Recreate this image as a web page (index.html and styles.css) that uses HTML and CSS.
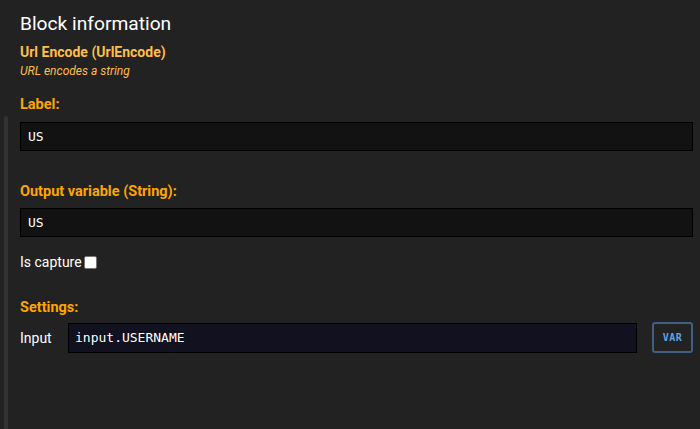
FILE: index.html
```html
<!DOCTYPE html>
<html>
<head>
<meta charset="utf-8">
<link rel="stylesheet" href="styles.css">
</head>
<body>
<div class="panel">
  <div class="rail"></div>
  <div class="content">
    <h1 class="title">Block information</h1>
    <div class="block-name">Url Encode (UrlEncode)</div>
    <div class="block-desc">URL encodes a string</div>

    <div class="field-label label-first">Label:</div>
    <div class="text-box">US</div>

    <div class="field-label label-output">Output variable (String):</div>
    <div class="text-box">US</div>

    <label class="capture">Is capture<span class="check"></span></label>

    <div class="field-label label-settings">Settings:</div>
    <div class="setting-row">
      <span class="setting-name">Input</span>
      <div class="setting-box">input.USERNAME</div>
      <button class="var-btn">VAR</button>
    </div>
  </div>
</div>
</body>
</html>
```
FILE: styles.css
```css
html, body {
  margin: 0;
  padding: 0;
  background: #222222;
  height: 100%;
}
body {
  font-family: Roboto, "Liberation Sans", sans-serif;
  color: #ffffff;
  overflow: hidden;
}
.panel {
  display: flex;
  height: 429px;
}
.rail {
  width: 4px;
  margin-left: 4px;
  margin-top: 116px;
  background: #333333;
  border-radius: 2px 2px 0 0;
  flex: none;
}
.content {
  flex: 1;
  padding: 11px 7px 0 12px;
  display: flex;
  flex-direction: column;
}
.title {
  margin: 0;
  font-size: 19.2px;
  font-weight: 400;
  line-height: 26px;
  color: #ffffff;
}
.block-name {
  margin-top: 7px;
  font-size: 14px;
  font-weight: 700;
  line-height: 16px;
  color: #ffbe46;
}
.block-desc {
  margin-top: 4px;
  font-size: 12px;
  font-style: italic;
  line-height: 14px;
  color: #ffbe46;
}
.field-label {
  font-size: 14.5px;
  font-weight: 700;
  line-height: 18px;
  color: #ffa500;
}
.label-first { margin-top: 18px; }
.label-output { margin-top: 32px; }
.label-settings { margin-top: 28px; }
.text-box {
  margin-top: 8px;
  box-sizing: border-box;
  height: 29px;
  background: #121212;
  border: 1px solid #000000;
  padding: 0 7px;
  font-family: "DejaVu Sans Mono", monospace;
  font-size: 13px;
  line-height: 27px;
  color: #ffffff;
}
.label-output + .text-box { margin-top: 7px; }
.capture {
  margin-top: 16px;
  display: flex;
  align-items: center;
  font-size: 14px;
  line-height: 18px;
  color: #ffffff;
}
.check {
  display: inline-block;
  width: 11px;
  height: 11px;
  margin-left: 2px;
  background: #ffffff;
  border: 1px solid #767676;
  border-radius: 2px;
}
.setting-row {
  margin-top: 5px;
  display: flex;
  align-items: center;
}
.setting-name {
  width: 48px;
  font-size: 14px;
  line-height: 18px;
}
.setting-box {
  flex: 1;
  box-sizing: border-box;
  height: 30px;
  background: #11111f;
  border: 1px solid #000000;
  padding: 0 6px;
  font-family: "DejaVu Sans Mono", monospace;
  font-size: 13px;
  line-height: 28px;
  color: #ffffff;
}
.var-btn {
  margin-left: 15px;
  box-sizing: border-box;
  width: 41px;
  height: 31px;
  background: transparent;
  border: 2px solid #3f5f83;
  border-radius: 3px;
  color: #5ea3e6;
  font-family: "DejaVu Sans Mono", monospace;
  font-size: 10px;
  font-weight: 700;
  padding: 0;
  letter-spacing: 0.5px;
}
```
